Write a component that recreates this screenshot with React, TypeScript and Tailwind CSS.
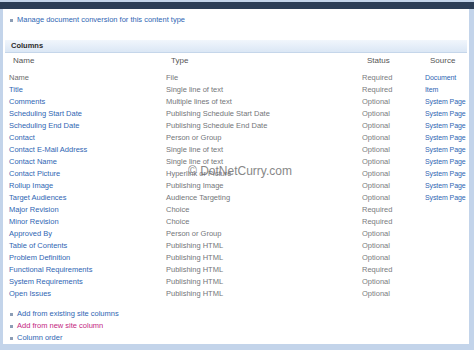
import React from 'react';

type Row = { name: string; type: string; status: string; source?: string };

const rows: Row[] = [
  { name: 'Name', type: 'File', status: 'Required', source: 'Document' },
  { name: 'Title', type: 'Single line of text', status: 'Required', source: 'Item' },
  { name: 'Comments', type: 'Multiple lines of text', status: 'Optional', source: 'System Page' },
  { name: 'Scheduling Start Date', type: 'Publishing Schedule Start Date', status: 'Optional', source: 'System Page' },
  { name: 'Scheduling End Date', type: 'Publishing Schedule End Date', status: 'Optional', source: 'System Page' },
  { name: 'Contact', type: 'Person or Group', status: 'Optional', source: 'System Page' },
  { name: 'Contact E-Mail Address', type: 'Single line of text', status: 'Optional', source: 'System Page' },
  { name: 'Contact Name', type: 'Single line of text', status: 'Optional', source: 'System Page' },
  { name: 'Contact Picture', type: 'Hyperlink or Picture', status: 'Optional', source: 'System Page' },
  { name: 'Rollup Image', type: 'Publishing Image', status: 'Optional', source: 'System Page' },
  { name: 'Target Audiences', type: 'Audience Targeting', status: 'Optional', source: 'System Page' },
  { name: 'Major Revision', type: 'Choice', status: 'Required' },
  { name: 'Minor Revision', type: 'Choice', status: 'Required' },
  { name: 'Approved By', type: 'Person or Group', status: 'Optional' },
  { name: 'Table of Contents', type: 'Publishing HTML', status: 'Optional' },
  { name: 'Problem Definition', type: 'Publishing HTML', status: 'Optional' },
  { name: 'Functional Requirements', type: 'Publishing HTML', status: 'Required' },
  { name: 'System Requirements', type: 'Publishing HTML', status: 'Optional' },
  { name: 'Open Issues', type: 'Publishing HTML', status: 'Optional' },
];

const Bullet = () => <span className="w-[3px] h-[3px] bg-[#8c9db5] shrink-0" />;

const LinkItem = ({ label, visited }: { label: string; visited?: boolean }) => (
  <div className="flex items-center gap-[4px] h-[12px] pl-[7px]">
    <Bullet />
    <span className={visited ? 'text-[#c4267f]' : 'text-[#2f66b3]'}>{label}</span>
  </div>
);

export default function App() {
  return (
    <div
      className="w-[474px] h-[350px] bg-[#c3d4ea] pt-[2px] flex flex-col overflow-hidden text-[7.5px] leading-[12px]"
      style={{ fontFamily: '"Liberation Sans", Arial, sans-serif' }}
    >
      <div className="h-[7px] bg-[#2c3e57] shrink-0" />
      <div className="flex-1 flex pl-[3px] pr-[5px] pb-[6px] min-h-0">
        <div className="relative flex-1 bg-white flex flex-col">
          <div className="pt-[5px] h-[34px]">
            <LinkItem label="Manage document conversion for this content type" />
          </div>

          <div className="mx-[2px] h-[13px] bg-gradient-to-b from-[#f1f6fc] to-[#dbe7f5] border-b border-[#c5d6ea] flex items-center pl-[6px] font-bold text-[#2a2a2a]">
            Columns
          </div>

          <div className="grid grid-cols-[157px_196px_63px_1fr] pl-[6px] mt-[2px] mb-[5px] text-[#555] text-[8px]">
            <div className="pl-[4px]">Name</div>
            <div className="pl-[5px]">Type</div>
            <div className="pl-[5px]">Status</div>
            <div className="pl-[5px]">Source</div>
          </div>

          <div className="flex flex-col pl-[6px]">
            {rows.map((r, i) => (
              <div key={r.name} className="grid grid-cols-[157px_196px_63px_1fr] h-[12px]">
                <div className={i === 0 ? 'text-[#6e6e6e]' : 'text-[#2f66b3]'}>{r.name}</div>
                <div className="text-[#74767a] whitespace-nowrap">{r.type}</div>
                <div className="text-[#7a7c80]">{r.status}</div>
                <div className="text-[#2f66b3] whitespace-nowrap text-[7px] tracking-[-0.1px]">{r.source}</div>
              </div>
            ))}
          </div>

          <div className="mt-[8px] flex flex-col">
            <LinkItem label="Add from existing site columns" />
            <LinkItem label="Add from new site column" visited />
            <LinkItem label="Column order" />
          </div>

          <div className="absolute left-[185px] top-[155px] text-[12px] leading-[14px] text-[#6a6a6a] opacity-80 pointer-events-none">
            © DotNetCurry.com
          </div>
        </div>
      </div>
    </div>
  );
}
